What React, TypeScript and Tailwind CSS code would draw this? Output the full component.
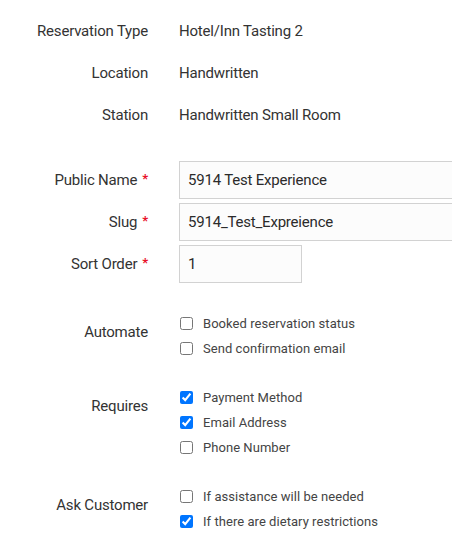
function Req() {
  return <span className="ml-[5px] text-[13px] font-bold text-[#e8102a] relative top-[-2px]">*</span>;
}

function InfoRow({ label, value }: { label: string; value: string }) {
  return (
    <div className="flex h-[42px] items-center">
      <div className="w-[148px] shrink-0 text-right">{label}</div>
      <div className="ml-[31px] whitespace-nowrap">{value}</div>
    </div>
  );
}

function InputRow({ label, value, width }: { label: string; value: string; width: string }) {
  return (
    <div className="flex h-[38px] items-center">
      <div className="w-[148px] shrink-0 text-right whitespace-nowrap">
        {label}
        <Req />
      </div>
      <div className="ml-[31px] shrink-0">
        <div
          className={`${width} h-[38px] flex items-center border border-[#d2d2d2] bg-[#fcfcfc] pl-[8px] whitespace-nowrap text-[#2b2b2b]`}
        >
          {value}
        </div>
      </div>
    </div>
  );
}

function Check({ label, checked }: { label: string; checked?: boolean }) {
  return (
    <label className="flex h-[25px] items-center text-[13px] tracking-[0.05px] text-[#444]">
      <input type="checkbox" defaultChecked={checked} className="m-0 ml-[1px] h-[13px] w-[13px]" />
      <span className="ml-[10px] whitespace-nowrap">{label}</span>
    </label>
  );
}

function Group({ label, items, className }: { label: string; items: [string, boolean][]; className?: string }) {
  return (
    <div className={`flex ${className ?? ""}`}>
      <div className="w-[148px] shrink-0 pt-[11px] text-right leading-[20px]">{label}</div>
      <div className="ml-[31px] flex flex-col">
        {items.map(([t, c]) => (
          <Check key={t} label={t} checked={c} />
        ))}
      </div>
    </div>
  );
}

export default function App() {
  return (
    <div className="w-[452px] h-[548px] overflow-hidden bg-white pt-[10px] font-['Roboto',sans-serif] text-[15px] tracking-[-0.2px] text-[#333]">
      <InfoRow label="Reservation Type" value="Hotel/Inn Tasting 2" />
      <InfoRow label="Location" value="Handwritten" />
      <InfoRow label="Station" value="Handwritten Small Room" />

      <div className="mt-[25px] flex flex-col gap-[4px]">
        <InputRow label="Public Name" value="5914 Test Experience" width="w-[320px]" />
        <InputRow label="Slug" value="5914_Test_Expreience" width="w-[320px]" />
        <InputRow label="Sort Order" value="1" width="w-[123px]" />
      </div>

      <Group
        className="mt-[28px]"
        label="Automate"
        items={[
          ["Booked reservation status", false],
          ["Send confirmation email", false],
        ]}
      />
      <Group
        className="mt-[24px]"
        label="Requires"
        items={[
          ["Payment Method", true],
          ["Email Address", true],
          ["Phone Number", false],
        ]}
      />
      <Group
        className="mt-[24px]"
        label="Ask Customer"
        items={[
          ["If assistance will be needed", false],
          ["If there are dietary restrictions", true],
        ]}
      />
    </div>
  );
}
